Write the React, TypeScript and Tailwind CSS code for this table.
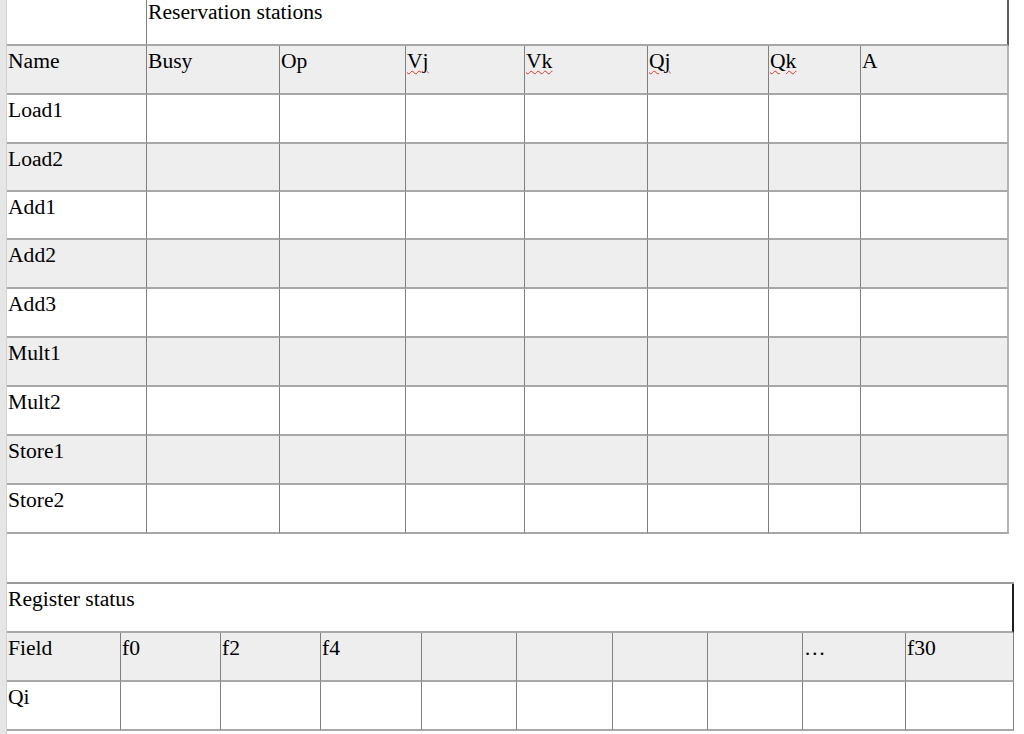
import React from "react";

const topCols = "grid-cols-[140px_133px_126px_119px_123px_121px_92px_148px]";
const botCols = "grid-cols-[114px_100px_100px_101px_95px_96px_95px_95px_103px_108px]";

const font = { fontFamily: '"Liberation Serif", "Times New Roman", serif' };

function Cell({
  children,
  gray,
  last,
  h,
  wavy,
}: {
  children?: React.ReactNode;
  gray?: boolean;
  last?: boolean;
  h: number;
  wavy?: boolean;
}) {
  return (
    <div
      className={`${gray ? "bg-[#eeeeee]" : "bg-white"} border-b-2 border-b-[#a8a8a8] ${
        last ? "border-r-2 border-r-[#b4b4b4]" : "border-r border-r-[#808080]"
      } pl-px pt-[2px] leading-[26px] text-black`}
      style={{ height: h }}
    >
      {wavy ? (
        <span className="underline decoration-wavy decoration-[#d8352a] decoration-1 underline-offset-[2px]">
          {children}
        </span>
      ) : (
        children
      )}
    </div>
  );
}

export default function App() {
  const headers = ["Name", "Busy", "Op", "Vj", "Vk", "Qj", "Qk", "A"];
  const wavyHeaders = new Set(["Vj", "Vk", "Qj", "Qk"]);
  const names = ["Load1", "Load2", "Add1", "Add2", "Add3", "Mult1", "Mult2", "Store1", "Store2"];
  const heights = [49, 48, 48, 49, 49, 49, 49, 49, 49];
  const regs = ["Field", "f0", "f2", "f4", "", "", "", "", "…", "f30"];

  return (
    <div className="flex w-[1024px] h-[734px] overflow-hidden bg-white text-[21.6px]" style={font}>
      <div className="w-[7px] shrink-0 bg-[#e6e6e6] border-r border-r-[#d2d2d2]" />
      <div className="flex flex-col">
        {/* Reservation stations */}
        <div className={`grid ${topCols}`}>
          <div className="h-[46px] border-b-2 border-b-[#a8a8a8] border-r border-r-[#808080]" />
          <div className="col-span-7 h-[46px] border-b-2 border-b-[#a8a8a8] border-r-2 border-r-[#5e5e5e] pl-px leading-[25px]">
            Reservation stations
          </div>
          {headers.map((t, i) => (
            <Cell key={t} gray h={49} last={i === headers.length - 1} wavy={wavyHeaders.has(t)}>
              {t}
            </Cell>
          ))}
          {names.map((n, r) => (
            <React.Fragment key={n}>
              {headers.map((_, c) => (
                <Cell key={c} gray={r % 2 === 1} h={heights[r]} last={c === headers.length - 1}>
                  {c === 0 ? n : null}
                </Cell>
              ))}
            </React.Fragment>
          ))}
        </div>

        <div className="h-[48px]" />

        {/* Register status */}
        <div className={`grid ${botCols} border-t-2 border-t-[#9a9a9a]`}>
          <div className="col-span-10 h-[49px] border-b-2 border-b-[#a8a8a8] border-r-2 border-r-[#1e1e1e] pl-px pt-[2px] leading-[26px]">
            Register status
          </div>
          {regs.map((t, i) => (
            <Cell key={i} gray h={49}>
              {t}
            </Cell>
          ))}
          {regs.map((_, i) => (
            <Cell key={"q" + i} h={49}>
              {i === 0 ? "Qi" : null}
            </Cell>
          ))}
        </div>
      </div>
    </div>
  );
}
